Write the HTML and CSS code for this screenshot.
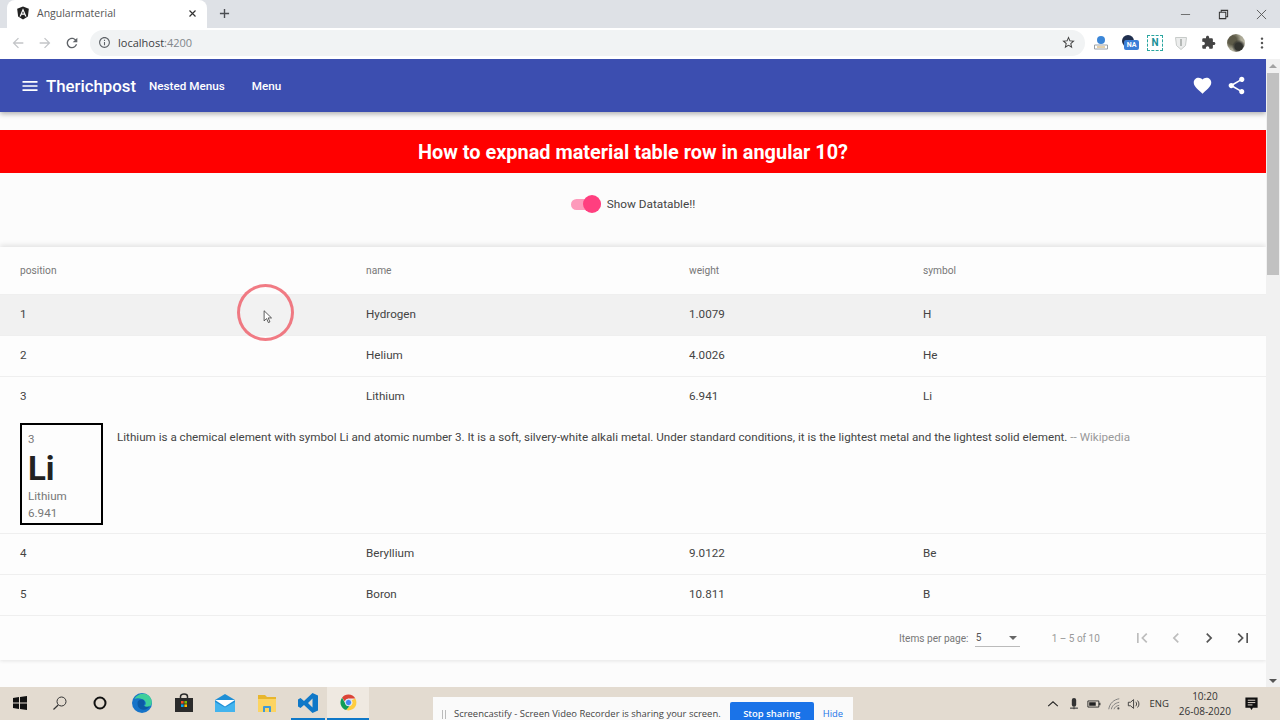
FILE: index.html
```html
<!DOCTYPE html>
<html lang="en">
<head>
<meta charset="utf-8">
<title>Angularmaterial</title>
<link rel="stylesheet" href="styles.css">
</head>
<body>
<div class="tabstrip">
  <div class="tab">
    <svg class="fav" viewBox="0 0 24 24"><path fill="#222" d="M12 1 2 4.600l1.600 13.200L12 23l8.400-5.200L22 4.600z"/><path fill="#fff" d="M12 4 6 18h2.300l1.200-3h5l1.200 3H18zm-1.700 9L12 8.800l1.700 4.200z"/></svg>
    <span class="tab-title">Angularmaterial</span>
    <svg class="tab-x" viewBox="0 0 12 12"><path d="M2 2l8 8M10 2l-8 8" stroke="#333" stroke-width="1.600"/></svg>
  </div>
  <svg class="newtab" viewBox="0 0 12 12"><path d="M6 1v10M1 6h10" stroke="#4a4d52" stroke-width="1.500"/></svg>
  <div class="winctl">
    <svg class="wc" viewBox="0 0 12 12"><path d="M1 6h10" stroke="#666" stroke-width="1"/></svg>
    <svg class="wc" viewBox="0 0 12 12"><path d="M1.500 3.500h7v7h-7zM3.500 3.500v-2h7v7h-2" fill="none" stroke="#333" stroke-width="1.100"/></svg>
    <svg class="wc" viewBox="0 0 12 12"><path d="M1 1l10 10M11 1 1 11" stroke="#555" stroke-width="1"/></svg>
  </div>
</div>

<div class="toolbar">
  <svg class="tb tb-off" viewBox="0 0 24 24"><path d="M20 11H7.830l5.590-5.590L12 4l-8 8 8 8 1.410-1.410L7.830 13H20v-2z"/></svg>
  <svg class="tb tb-off" viewBox="0 0 24 24"><path d="M12 4l-1.410 1.410L16.170 11H4v2h12.170l-5.580 5.590L12 20l8-8z"/></svg>
  <svg class="tb" viewBox="0 0 24 24"><path d="M17.650 6.350C16.200 4.900 14.210 4 12 4c-4.420 0-7.990 3.580-7.990 8s3.570 8 7.990 8c3.730 0 6.840-2.550 7.730-6h-2.080c-.82 2.330-3.040 4-5.650 4-3.310 0-6-2.690-6-6s2.690-6 6-6c1.660 0 3.140.69 4.220 1.780L13 11h7V4l-2.350 2.350z"/></svg>
  <div class="omnibox">
    <svg class="omni-info" viewBox="0 0 24 24"><path d="M11 7h2v2h-2zm0 4h2v6h-2zm1-9C6.480 2 2 6.480 2 12s4.480 10 10 10 10-4.480 10-10S17.520 2 12 2zm0 18c-4.410 0-8-3.590-8-8s3.590-8 8-8 8 3.590 8 8-3.590 8-8 8z"/></svg>
    <span class="url">localhost<span class="url-port">:4200</span></span>
    <svg class="omni-star" viewBox="0 0 24 24"><path d="M22 9.240l-7.190-.62L12 2 9.190 8.630 2 9.240l5.460 4.730L5.820 21 12 17.270 18.180 21l-1.630-7.030L22 9.240zM12 15.400l-3.760 2.270 1-4.280-3.320-2.880 4.380-.38L12 6.100l1.710 4.040 4.380.38-3.320 2.880 1 4.280L12 15.400z"/></svg>
  </div>
  <div class="exts">
    <svg class="ext" viewBox="0 0 16 16"><circle cx="8" cy="5" r="4" fill="#3b86d8"/><path d="M1.500 10h13v4h-13z" fill="none" stroke="#9aa0a6"/><path d="M4 12h8" stroke="#c9a35a"/></svg>
    <div class="ext ext-na"><span class="ext-dot"></span><span class="ext-badge">NA</span></div>
    <div class="ext ext-n">N</div>
    <svg class="ext" viewBox="0 0 16 16"><path d="M2.500 2.500h11l-1 8L8 14.500l-4.500-4z" fill="#eceded" stroke="#c7cbc9"/><path d="M8 4v7" stroke="#b5b9b7" stroke-width="2"/></svg>
    <svg class="ext ext-puzzle" viewBox="0 0 24 24"><path d="M20.500 11H19V7c0-1.100-.9-2-2-2h-4V3.500C13 2.120 11.880 1 10.500 1S8 2.120 8 3.500V5H4c-1.100 0-1.990.9-1.990 2v3.800H3.500c1.490 0 2.700 1.210 2.700 2.700s-1.210 2.700-2.700 2.700H2V20c0 1.100.9 2 2 2h3.800v-1.500c0-1.490 1.210-2.700 2.700-2.700 1.490 0 2.700 1.210 2.700 2.700V22H17c1.100 0 2-.9 2-2v-4h1.500c1.380 0 2.500-1.120 2.500-2.500S21.880 11 20.500 11z"/></svg>
    <div class="avatar"></div>
    <svg class="kebab" viewBox="0 0 4 16"><circle cx="2" cy="3" r="1.400"/><circle cx="2" cy="8" r="1.400"/><circle cx="2" cy="13" r="1.400"/></svg>
  </div>
</div>

<div class="viewport">
  <div class="page">
    <header class="appbar">
      <svg class="menu-icon" viewBox="0 0 24 24"><path d="M3 18h18v-2H3v2zm0-5h18v-2H3v2zm0-7v2h18V6H3z"/></svg>
      <span class="brand">Therichpost</span>
      <a class="navlink nav-first">Nested Menus</a>
      <a class="navlink nav-second">Menu</a>
      <svg class="bar-icon bar-heart" viewBox="0 0 24 24"><path d="M12 21.350l-1.450-1.320C5.400 15.360 2 12.280 2 8.500 2 5.420 4.420 3 7.500 3c1.740 0 3.410.81 4.500 2.090C13.090 3.810 14.760 3 16.500 3 19.580 3 22 5.420 22 8.500c0 3.780-3.400 6.860-8.550 11.540L12 21.350z"/></svg>
      <svg class="bar-icon" viewBox="0 0 24 24"><path d="M18 16.080c-.76 0-1.440.3-1.960.77L8.910 12.700c.05-.23.09-.46.09-.7s-.04-.47-.09-.7l7.050-4.110c.54.5 1.250.81 2.040.81 1.660 0 3-1.340 3-3s-1.340-3-3-3-3 1.340-3 3c0 .24.04.47.09.7L8.040 9.810C7.500 9.310 6.790 9 6 9c-1.660 0-3 1.340-3 3s1.340 3 3 3c.79 0 1.500-.31 2.040-.81l7.120 4.160c-.05.21-.08.43-.08.65 0 1.610 1.310 2.920 2.920 2.920 1.610 0 2.920-1.310 2.920-2.920s-1.310-2.920-2.920-2.920z"/></svg>
    </header>

    <h1 class="banner">How to expnad material table row in angular 10?</h1>

    <div class="toggle-row">
      <span class="toggle"><span class="toggle-thumb"></span></span>
      <span class="toggle-label">Show Datatable!!</span>
    </div>

    <section class="card">
      <table class="grid">
        <thead>
          <tr><th class="c1">position</th><th class="c2">name</th><th class="c3">weight</th><th class="c4">symbol</th></tr>
        </thead>
        <tbody>
          <tr class="hover"><td>1</td><td>Hydrogen</td><td>1.0079</td><td>H</td></tr>
          <tr><td>2</td><td>Helium</td><td>4.0026</td><td>He</td></tr>
          <tr class="open"><td>3</td><td>Lithium</td><td>6.941</td><td>Li</td></tr>
          <tr class="detail">
            <td colspan="4">
              <div class="detail-inner">
                <div class="element">
                  <div class="el-num">3</div>
                  <div class="el-sym">Li</div>
                  <div class="el-name">Lithium</div>
                  <div class="el-weight">6.941</div>
                </div>
                <p class="desc">Lithium is a chemical element with symbol Li and atomic number 3. It is a soft, silvery-white alkali metal. Under standard conditions, it is the lightest metal and the lightest solid element. <span class="attr">-- Wikipedia</span></p>
              </div>
            </td>
          </tr>
          <tr><td>4</td><td>Beryllium</td><td>9.0122</td><td>Be</td></tr>
          <tr><td>5</td><td>Boron</td><td>10.811</td><td>B</td></tr>
        </tbody>
      </table>
      <div class="paginator">
        <span class="pg-label">Items per page:</span>
        <span class="pg-select"><span>5</span><span class="pg-caret"></span></span>
        <span class="pg-range">1 – 5 of 10</span>
        <svg class="pg-btn pg-off" viewBox="0 0 24 24"><path d="M18.410 16.590L13.820 12l4.590-4.590L17 6l-6 6 6 6zM6 6h2v12H6z"/></svg>
        <svg class="pg-btn pg-off" viewBox="0 0 24 24"><path d="M15.410 7.410L14 6l-6 6 6 6 1.410-1.410L10.830 12z"/></svg>
        <svg class="pg-btn" viewBox="0 0 24 24"><path d="M10 6L8.590 7.410 13.170 12l-4.580 4.590L10 18l6-6z"/></svg>
        <svg class="pg-btn" viewBox="0 0 24 24"><path d="M5.590 7.410L10.180 12l-4.590 4.590L7 18l6-6-6-6zM16 6h2v12h-2z"/></svg>
      </div>
    </section>

    <div class="click-ring"></div>
    <svg class="cursor" viewBox="0 0 12 18"><path d="M1 1v13l3.200-3 2.300 5.200 2-.9-2.300-5.100H10.500z" fill="#fff" stroke="#333" stroke-width="1"/></svg>
  </div>
  <div class="scrollbar">
    <span class="sb-up"></span>
    <span class="sb-thumb"></span>
    <span class="sb-down"></span>
  </div>
</div>

<footer class="taskbar">
  <div class="tb-cell tb-sys"><svg class="ti" viewBox="0 0 16 16"><path fill="#111" d="M1 3l6-.9V7.600H1zM8 2l7-1v6.600H8zM1 8.400h6v5.500l-6-.9zM8 8.400h7V15l-7-1z"/></svg></div>
  <div class="tb-cell tb-sys"><svg class="ti" viewBox="0 0 16 16"><circle cx="9.500" cy="6.500" r="4.500" fill="none" stroke="#333" stroke-width="1"/><path d="M6.200 10 1.500 14.500" stroke="#333" stroke-width="1.200"/></svg></div>
  <div class="tb-cell tb-sys"><svg class="ti" viewBox="0 0 16 16"><circle cx="8" cy="8" r="5.500" fill="none" stroke="#111" stroke-width="2"/></svg></div>
  <div class="tb-cell tb-edge"><svg class="ti-lg" viewBox="0 0 20 20"><circle cx="10" cy="10" r="10" fill="#1673c8"/><path d="M2.500 6C5 .5 14-1.500 18 4c2.500 3.500 2.500 8-.5 9.500-2.500 1-5 .5-5.500-.5 2.500-1 2.500-5-1-6.500C7.500 5 4.500 5 2.500 6z" fill="#3ecf9b"/><path d="M5.500 10c0-2.800 2.500-4 5-3.500 2.500.6 3 4.500 1 6 2 1.500 4.500 1.500 6.500.3-2 3.700-6.500 5-9.500 3.200C6 14.500 5.500 12.500 5.500 10z" fill="#0c5aa6"/></svg></div>
  <div class="tb-cell"><svg class="ti-lg" viewBox="0 0 20 20"><path d="M6.500 5V3.500a3.500 2.500 0 0 1 7 0V5" fill="none" stroke="#2b2b2b" stroke-width="1.500"/><path d="M1 5h18v14H1z" fill="#2b2b2b"/><path d="M7 8h2.600v2.600H7z" fill="#f25022"/><path d="M10.400 8H13v2.600h-2.600z" fill="#7fba00"/><path d="M7 11.400h2.600V14H7z" fill="#00a4ef"/><path d="M10.400 11.400H13V14h-2.600z" fill="#ffb900"/></svg></div>
  <div class="tb-cell"><svg class="ti-lg" viewBox="0 0 20 20"><path d="M0 7l10-6 10 6v12H0z" fill="#1f8fd6"/><path d="M0 7h20l-10 6.500z" fill="#fff"/><path d="M0 9l10 5.500L20 9v10H0z" fill="#43b4ee"/></svg></div>
  <div class="tb-cell"><svg class="ti-lg" viewBox="0 0 20 20"><path d="M1 2h7l2 2h9v5H1z" fill="#e8b62e"/><path d="M1 6h18v13H1z" fill="#fcd462"/><path d="M6 19v-5a1 1 0 0 1 1-1h6a1 1 0 0 1 1 1v5h-2v-4H8v4z" fill="#3f9ad8"/></svg></div>
  <div class="tb-cell tb-open tb-code"><svg class="ti-lg" viewBox="0 0 20 20"><path d="M14.500 0 20 2.500v15L14.500 20 6 12l-3.500 3L0 13.500V6.500L2.500 5 6 8zM14.500 5.500 10 10l4.500 4.500z" fill="#0f78c8"/></svg></div>
  <div class="tb-cell tb-open tb-active"><svg class="ti-chrome" viewBox="0 0 48 48"><path fill="#db4437" d="M24 4a20 20 0 0 1 17.300 10H24a10 10 0 0 0-9.500 6.800L7.700 11.900A20 20 0 0 1 24 4z"/><path fill="#0f9d58" d="M7.700 11.900l8.800 15.200A10 10 0 0 0 27 33.600L18.400 43.200A20 20 0 0 1 7.700 11.900z"/><path fill="#ffcd40" d="M41.300 14A20 20 0 0 1 24 44l-5.600-.8L27 33.600a10 10 0 0 0 5-15.600z"/><circle cx="24" cy="24" r="8" fill="#4285f4" stroke="#fff" stroke-width="2"/></svg></div>

  <div class="sharebar">
    <span class="share-grip"></span>
    <span class="share-text">Screencastify - Screen Video Recorder is sharing your screen.</span>
    <span class="share-btn">Stop sharing</span>
    <span class="share-hide">Hide</span>
  </div>

  <div class="tray">
    <svg class="tray-ic" viewBox="0 0 16 16"><path d="M2.500 10.500 8 5.500l5.500 5" fill="none" stroke="#222" stroke-width="1.200"/></svg>
    <svg class="tray-ic" viewBox="0 0 16 16"><rect x="5.500" y="1" width="5" height="10" rx="2.500" fill="#333"/><path d="M3.500 12h9v1.500h-9z" fill="#555"/><path d="M8 11v3" stroke="#333"/></svg>
    <svg class="tray-ic" viewBox="0 0 16 16"><path d="M1 4.500h12.500v7H1z" fill="none" stroke="#222"/><path d="M2.500 6h7.500v4H2.500z" fill="#222"/><path d="M14 6.500h1.300v3H14z" fill="#222"/></svg>
    <svg class="tray-ic" viewBox="0 0 16 16"><path d="M2 14C3 7 8 3 14 2M5 14c.6-4 4-7 9-8M8 14c.4-2 2.500-4 6-4.500" fill="none" stroke="#777"/><circle cx="13" cy="13" r="1.200" fill="#555"/></svg>
    <svg class="tray-ic" viewBox="0 0 16 16"><path d="M1.500 6H4l3.500-3v10L4 10H1.500z" fill="none" stroke="#333"/><path d="M10 5.500c1.300 1.500 1.300 3.500 0 5M12 4c2.200 2.300 2.200 5.700 0 8" fill="none" stroke="#333"/></svg>
    <span class="tray-lang">ENG</span>
    <span class="tray-clock"><span>10:20</span><span>26-08-2020</span></span>
    <svg class="tray-note" viewBox="0 0 16 16"><path d="M1.500 1.500h13v11H9.500L8 14.800 6.500 12.500h-5z" fill="#111"/><path d="M4 4.500h8M4 7h8M4 9.500h5" stroke="#e4dcd2"/></svg>
  </div>
</footer>
</body>
</html>
```

FILE: styles.css
```css
* { box-sizing: border-box; }
html, body { margin: 0; padding: 0; height: 720px; overflow: hidden; }
body { display: flex; flex-direction: column; width: 1280px; font-family: Roboto, "Liberation Sans", sans-serif; background: #fcfcfc; color: #333; }
svg { display: block; flex: none; }

/* browser tabs */
.tabstrip { height: 28px; flex: none; background: #dee1e6; display: flex; align-items: flex-end; padding-left: 7px; }
.tab { width: 200px; height: 28px; background: #fff; border-radius: 8px 8px 0 0; display: flex; align-items: center; padding: 0 10px 2px 9px; }
.fav { width: 14px; height: 14px; margin-right: 7px; }
.tab-title { font: 10.5px "Open Sans", sans-serif; color: #555; flex: 1; }
.tab-x { width: 9px; height: 9px; }
.newtab { width: 11px; height: 11px; margin: 0 0 9px 12px; }
.winctl { margin-left: auto; display: flex; height: 28px; align-items: center; gap: 27px; padding-right: 13px; }
.wc { width: 11px; height: 11px; }

/* browser toolbar */
.toolbar { height: 31px; flex: none; background: #fff; display: flex; align-items: center; padding: 0 0 2px 10px; }
.tb { width: 16px; height: 16px; margin-right: 11px; fill: #5f6368; }
.tb-off { fill: #c3c5c8; }
.omnibox { width: 995px; height: 26px; margin-left: -1px; border-radius: 13px; background: #f1f3f4; display: flex; align-items: center; padding: 0 10px 0 8px; }
.omni-info { width: 13px; height: 13px; fill: #5f6368; margin-right: 7px; }
.url { font: 11px "Open Sans", sans-serif; color: #3c4043; }
.url-port { color: #80868b; }
.omni-star { width: 15px; height: 15px; margin-left: auto; fill: #444; margin-right: -1px; }
.exts { display: flex; align-items: center; flex: 1; padding-left: 8px; gap: 10px; }
.ext { width: 16px; height: 16px; flex: none; }
.ext-na { position: relative; margin-left: 2px; }
.ext-dot { display: block; width: 12px; height: 12px; border-radius: 50%; background: #1f2f4f; margin-left: 1px; }
.ext-badge { position: absolute; left: 3px; top: 5px; width: 15px; height: 10px; border-radius: 2px; background: #3b7fd8; color: #fff; font: 700 7px/10px Roboto, sans-serif; text-align: center; }
.ext-n { border: 1px dashed #2aa6a0; color: #1c8f96; font: 700 10px/14px Roboto, sans-serif; text-align: center; }
.ext-puzzle { fill: #444; width: 15px; height: 15px; margin-left: 2px; }
.avatar { width: 18px; height: 18px; border-radius: 50%; background: radial-gradient(circle at 65% 70%, #33332f 0 22%, transparent 40%), radial-gradient(circle at 30% 35%, #5d5a48 0 25%, transparent 50%), linear-gradient(135deg, #8c8a72, #c9c6b8); margin-left: 1px; }
.kebab { width: 4px; height: 14px; fill: #555; margin-left: 5px; }

/* viewport */
.viewport { height: 628px; flex: none; display: flex; }
.page { position: relative; flex: 1; min-width: 0; overflow: hidden; background: #fcfcfc; }
.scrollbar { width: 14px; flex: none; background: #f1f1f1; display: flex; flex-direction: column; align-items: center; }
.sb-up { width: 0; height: 0; margin-top: 5px; border: 4px solid transparent; border-top: 0; border-bottom-color: #a3a3a3; }
.sb-thumb { width: 12px; height: 202px; margin-top: 5px; background: #c1c1c1; }
.sb-down { width: 0; height: 0; margin-top: auto; margin-bottom: 4px; border: 4px solid transparent; border-bottom: 0; border-top-color: #555; }

/* app bar */
.appbar { height: 53px; background: #3c4eb0; color: #fff; display: flex; align-items: center; padding: 0 19px 0 20px; box-shadow: 0 2px 5px rgba(0,0,0,.3); }
.menu-icon { width: 20px; height: 20px; fill: #fff; }
.brand { font-size: 16.800px; font-weight: 500; margin-left: 6px; }
.navlink { font-size: 11.700px; font-weight: 500; color: #fff; }
.nav-first { margin-left: 13px; }
.nav-second { margin-left: 27px; }
.bar-icon { width: 21px; height: 21px; fill: #fff; }
.bar-heart { margin-left: auto; margin-right: 13px; }

.banner { margin: 18px 0 0; height: 43px; background: #f00; color: #fff; font-size: 19.900px; font-weight: 700; line-height: 45px; text-align: center; overflow: hidden; }

/* toggle */
.toggle-row { height: 74px; display: flex; align-items: center; justify-content: center; gap: 6px; padding-bottom: 12px; }
.toggle { position: relative; width: 30px; height: 11px; border-radius: 6px; background: #fd9abb; }
.toggle-thumb { position: absolute; right: 0; top: -3.500px; width: 18px; height: 18px; border-radius: 50%; background: #ff3f7f; }
.toggle-label { font-size: 11.800px; color: #444; }

/* table */
.card { background: #fdfdfd; box-shadow: 0 -2px 5px rgba(0,0,0,.1), 0 2px 3px rgba(0,0,0,.05); height: 413px; }
.grid { width: 100%; border-collapse: collapse; table-layout: fixed; font-size: 11.650px; color: #444; }
.grid th { height: 47px; padding: 0; font-size: 10.200px; font-weight: 400; color: #777; text-align: left; }
.grid th.c1 { width: 366px; padding-left: 20px; }
.grid th.c2 { width: 323px; }
.grid th.c3 { width: 234px; }
.grid td { height: 41px; padding: 0 0 1px; border-top: 1px solid #efefef; }
.grid td:first-child { padding-left: 20px; }
.grid tbody tr.hover td { background: #f1f1f1; }
.grid tbody tr.detail td { border-top: 0; height: 116px; vertical-align: top; padding: 0 0 0 20px; }
.detail-inner { display: flex; padding-top: 6px; }
.element { width: 83px; height: 102px; border: 2px solid #000; padding: 6px; flex: none; color: #777; }
.el-num { font-size: 11.500px; line-height: 17px; }
.el-sym { font-size: 33px; font-weight: 700; line-height: 42px; color: #222; height: 40px; }
.el-name { font-size: 11.650px; line-height: 17px; }
.el-weight { font-size: 11.650px; line-height: 17px; }
.desc { margin: 7px 0 0 14px; font-size: 11.650px; line-height: 14px; white-space: nowrap; color: #444; }
.attr { color: #999; }

/* paginator */
.paginator { height: 45px; border-top: 1px solid #efefef; display: flex; align-items: center; font-size: 10.100px; color: #777; padding-left: 899px; }
.pg-label { width: 76px; }
.pg-select { width: 45px; height: 18px; display: flex; justify-content: space-between; align-items: center; border-bottom: 1px solid #bbb; color: #555; padding: 0 3px 0 1px; }
.pg-caret { width: 0; height: 0; border: 4px solid transparent; border-top: 4px solid #666; border-bottom: 0; }
.pg-range { margin-left: 32px; width: 81px; font-size: 10px; color: #999; }
.pg-btn { width: 20px; height: 20px; fill: #555; margin-right: 13.400px; }
.pg-off { fill: #bdbdbd; }

/* cursor highlight */
.click-ring { position: absolute; left: 237px; top: 225px; width: 57px; height: 57px; border-radius: 50%; border: 3.500px solid rgba(238,100,110,.85); background: rgba(255,255,255,.12); }
.cursor { position: absolute; left: 263px; top: 251px; width: 10px; height: 14px; }

/* taskbar */
.taskbar { position: relative; flex: 1; background: #e3dbd0; display: flex; align-items: stretch; }
.tb-cell { width: 41.600px; display: flex; align-items: center; justify-content: center; border-bottom: 2px solid transparent; }
.tb-sys { width: 40px; }
.tb-edge { margin-left: 1.500px; }
.tb-code { width: 34px; margin: 0 2px 0 3.100px; }
.tb-open { border-bottom-color: #0f78c8; }
.tb-active { width: 42px; padding-left: 2px; background: #efe9e1; }
.ti { width: 16px; height: 16px; }
.ti-lg { width: 20px; height: 20px; }
.ti-chrome { width: 19px; height: 19px; }
.sharebar { position: absolute; left: 433px; top: 10px; width: 420px; height: 23px; background: #fafafa; display: flex; align-items: flex-start; padding: 5px 0 0 9px; font: 9.450px/12px "Open Sans", sans-serif; color: #444; }
.share-grip { width: 4px; height: 9px; border: solid #bbb; border-width: 0 1px; margin: 8px 8px 0 0; }
.share-text { white-space: nowrap; margin-top: 6px; }
.share-btn { margin-left: 9px; width: 84px; height: 18px; background: #1a73e8; border-radius: 2px 2px 0 0; color: #fff; font-weight: 600; text-align: center; line-height: 24px; }
.share-hide { margin: 6px 0 0 9px; color: #1a73e8; }
.tray { margin-left: auto; display: flex; align-items: center; padding-right: 21px; gap: 6.250px; }
.tray-ic { width: 14px; height: 14px; }
.tray-lang { font: 9.500px "Open Sans", sans-serif; color: #333; margin-left: 1.750px; }
.tray-clock { display: flex; flex-direction: column; align-items: center; font: 10px/15px "Open Sans", sans-serif; color: #333; margin-left: 3.750px; }
.tray-note { width: 15px; height: 15px; margin-left: 6.750px; }
```
